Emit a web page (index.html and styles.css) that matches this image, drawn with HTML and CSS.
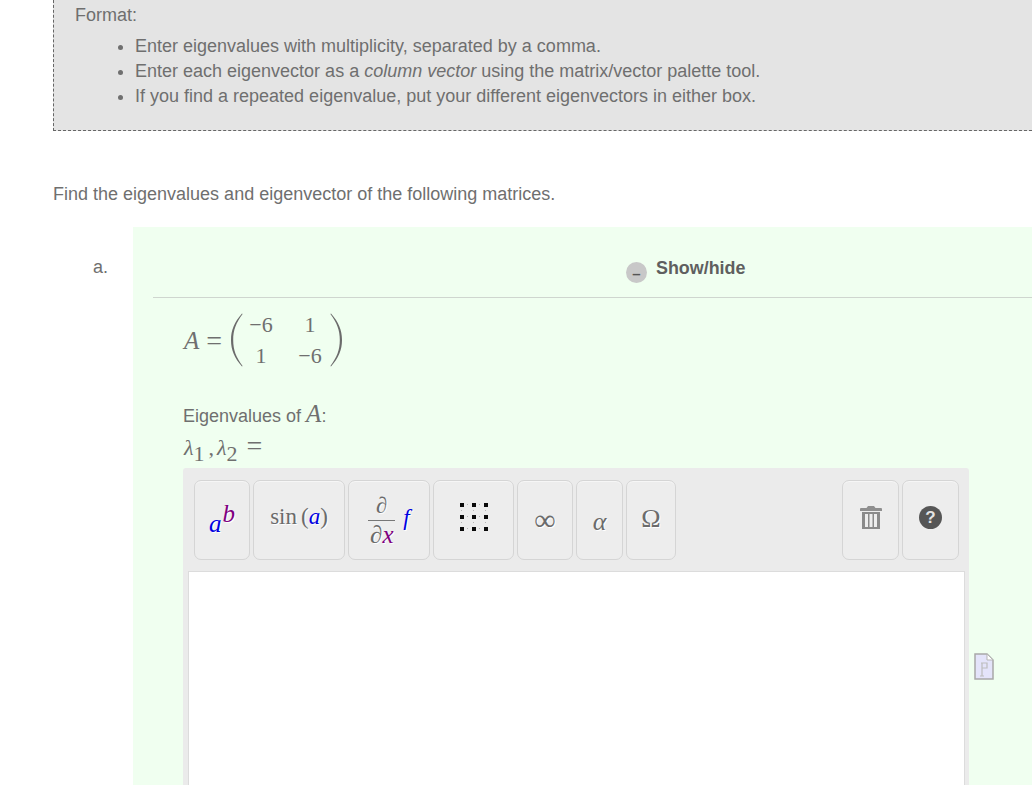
FILE: index.html
```html
<!DOCTYPE html>
<html lang="en">
<head>
<meta charset="utf-8">
<title>Eigenvalues</title>
<link rel="stylesheet" href="styles.css">
</head>
<body>
<section class="notice">
  <p class="notice-title">Format:</p>
  <ul class="notice-list">
    <li>Enter eigenvalues with multiplicity, separated by a comma.</li>
    <li>Enter each eigenvector as a <em>column vector</em> using the matrix/vector palette tool.</li>
    <li>If you find a repeated eigenvalue, put your different eigenvectors in either box.</li>
  </ul>
</section>
<p class="intro">Find the eigenvalues and eigenvector of the following matrices.</p>
<section class="part">
  <div class="part-label">a.</div>
  <div class="panel">
    <header class="panel-head">
      <span class="toggle">–</span>
      <span class="toggle-text">Show/hide</span>
    </header>
    <div class="matrix-line math">
      <span class="mvar">A</span><span class="meq">=</span>
      <svg class="paren" width="13" height="54" viewBox="0 0 13 54"><path d="M12 .5C4.500 9 1 17 1 27s3.500 18 11 26.500l.6-.5C6 44 3.200 37 3.200 27S6 10 12.600 1z" fill="#6b6b6b"/></svg>
      <div class="matrix">
        <span>−6</span><span>1</span>
        <span>1</span><span>−6</span>
      </div>
      <svg class="paren" width="13" height="54" viewBox="0 0 13 54"><path d="M1 .5C8.500 9 12 17 12 27s-3.500 18-11 26.500L.4 53C7 44 9.800 37 9.800 27S7 10 .4 1z" fill="#6b6b6b"/></svg>
    </div>
    <p class="label">Eigenvalues of <span class="mvar-inline">A</span>:</p>
    <div class="lambda-line math"><i>λ</i><sub>1</sub><span class="comma">,</span><i>λ</i><sub>2</sub><span class="lambda-eq">=</span></div>
    <div class="editor-wrap">
      <div class="toolbar">
        <button class="tb w56 math"><i class="blue big base">a</i><i class="purple big power">b</i></button>
        <button class="tb w92 math raised">sin<span class="thin"> (</span><i class="blue">a</i>)</button>
        <button class="tb w82 math">
          <span class="frac"><span class="frac-top">∂</span><span class="frac-bot">∂<i class="purple">x</i></span></span><i class="blue fn">f</i>
        </button>
        <button class="tb w81">
          <svg class="icon-up" width="30" height="30" viewBox="0 0 30 30">
            <g fill="#b5b5b5"><rect x="8" y="2" width="1" height="1"/><rect x="20" y="2" width="1" height="1"/><rect x="8" y="14" width="1" height="1"/><rect x="20" y="14" width="1" height="1"/><rect x="8" y="26" width="1" height="1"/><rect x="20" y="26" width="1" height="1"/><rect x="2" y="8" width="1" height="1"/><rect x="14" y="8" width="1" height="1"/><rect x="26" y="8" width="1" height="1"/><rect x="2" y="20" width="1" height="1"/><rect x="14" y="20" width="1" height="1"/><rect x="26" y="20" width="1" height="1"/></g>
            <g fill="#0a0a0a"><rect x="1" y="1" width="4" height="4"/><rect x="13" y="1" width="4" height="4"/><rect x="25" y="1" width="4" height="4"/><rect x="1" y="13" width="4" height="4"/><rect x="13" y="13" width="4" height="4"/><rect x="25" y="13" width="4" height="4"/><rect x="1" y="25" width="4" height="4"/><rect x="13" y="25" width="4" height="4"/><rect x="25" y="25" width="4" height="4"/></g>
          </svg>
        </button>
        <button class="tb w56 math sym-inf">∞</button>
        <button class="tb w47 math sym-alpha"><i>α</i></button>
        <button class="tb w50 math sym-omega">Ω</button>
        <button class="tb w57 push">
          <svg class="icon-up" width="24" height="25" viewBox="0 0 24 25"><path d="M9 1h6l1.500 2H22a1 1 0 0 1 1 1v2H1V4a1 1 0 0 1 1-1h5.500z" fill="#8f8f8f"/><path d="M3 7h18v17H3zM6 9v13h3V9zM10.500 9v13h3V9zM15 9v13h3V9z" fill="#8a8a8a" fill-rule="evenodd"/></svg>
        </button>
        <button class="tb w57">
          <span class="help">?</span>
        </button>
      </div>
      <div class="editor"></div>
      <svg class="file-icon" width="20" height="27" viewBox="0 0 20 27"><path d="M1 1h12l6 6v19H1z" fill="#e4e4fa" stroke="#a8a8a8" stroke-width="1.500"/><path d="M13 1l6 6h-6z" fill="#fff" stroke="#b5b5b5"/><path d="M7 10h6v5H8M8 10v13M6 23h4" fill="none" stroke="#bdbdbd" stroke-width="1.200"/></svg>
    </div>
  </div>
</section>
</body>
</html>
```
FILE: styles.css
```css
html, body {
  margin: 0;
  padding: 0;
  height: 785px;
  overflow: hidden;
  background: #fff;
}
body {
  font-family: "Liberation Sans", Arial, sans-serif;
  font-size: 18px;
  line-height: 25px;
  color: #6f6f6f;
}
p { margin: 0; }

.notice {
  margin-left: 53px;
  height: 130px;
  background: #e4e4e4;
  border-left: 1px dashed #666;
  border-bottom: 1px dashed #666;
  padding-left: 21px;
}
.notice-title { padding-top: 3px; }
.notice-list {
  margin: 6px 0 0;
  padding-left: 60px;
}
.intro {
  margin: 51px 0 0 53px;
}

.part {
  display: flex;
  margin-top: 20px;
}
.part-label {
  flex: none;
  width: 40px;
  margin-left: 93px;
  padding-top: 28px;
}
.panel {
  flex: 1;
  background: #f0fff0;
  padding-left: 20px;
  height: 600px;
  min-width: 0;
}
.panel-head {
  display: flex;
  align-items: flex-start;
  height: 70px;
  border-bottom: 1px solid #cfd6cf;
  padding-left: 473px;
}
.toggle {
  margin-top: 35px;
  width: 21px;
  height: 21px;
  border-radius: 50%;
  background: #c8c8c8;
  color: #555;
  font-size: 15px;
  font-weight: bold;
  line-height: 23px;
  text-align: center;
}
.toggle-text {
  margin: 29px 0 0 9px;
  font-weight: bold;
  font-size: 17.900px;
  color: #5f5f5f;
}

.math {
  font-family: "Liberation Serif", "DejaVu Serif", serif;
}
.matrix-line {
  display: flex;
  align-items: center;
  margin: 15px 0 0 31px;
  height: 54px;
  font-size: 25px;
}
.mvar { font-style: italic; }
.meq {
  font-size: 28px;
  margin: 0 8px 0 7px;
}
.matrix {
  display: grid;
  grid-template-columns: 36px 36px;
  column-gap: 13px;
  grid-auto-rows: 31px;
  margin: 0 2px 0 0;
  justify-items: center;
  align-items: center;
  font-size: 22px;
}
.paren { flex: none; }

.label {
  margin: 37px 0 0 30px;
}
.mvar-inline {
  font-family: "Liberation Serif", serif;
  font-style: italic;
  font-size: 25px;
  line-height: 0;
}
.lambda-line {
  margin: 6px 0 0 31px;
  height: 33px;
  font-size: 22px;
  line-height: 26px;
}
.lambda-line sub { font-size: 22px; line-height: 0; vertical-align: -6px; }
.comma { margin: 0 3px 0 4px; }
.lambda-eq {
  font-size: 28px;
  line-height: 0;
  margin-left: 9px;
}

.editor-wrap {
  position: relative;
  margin-left: 30px;
  width: 786px;
  height: 400px;
  box-sizing: border-box;
  background: #ebebeb;
  padding: 12px 4px 0 5px;
  border-radius: 3px 3px 0 0;
}
.toolbar {
  display: flex;
  gap: 3px;
  padding: 0 6px;
}
.tb {
  flex: none;
  height: 80px;
  padding: 0;
  display: flex;
  align-items: center;
  justify-content: center;
  background: #ededed;
  border: 1px solid #d5d5d5;
  border-radius: 7px;
  box-shadow: inset 0 1px 0 #f6f6f6;
  color: #6b6b6b;
  font-size: 23px;
  text-shadow: 1px 1px 0 #fff;
}
.w47 { width: 47px; }
.w50 { width: 50px; }
.w56 { width: 56px; }
.w57 { width: 57px; }
.w81 { width: 81px; }
.w82 { width: 82px; }
.w92 { width: 92px; }
.push { margin-left: auto; }
.blue { color: #0000e0; }
.purple { color: #800080; }
.big { font-size: 25px; line-height: 25px; }
.base { margin-top: 6px; }
.power { align-self: flex-start; margin: 20px 0 0 1px; }
.raised { padding-bottom: 6px; }
.thin { margin-left: 4px; }
.frac {
  display: inline-flex;
  flex-direction: column;
  align-items: center;
  margin-right: 8px;
}
.frac-top {
  width: 27px;
  text-align: center;
  border-bottom: 1px solid #777;
  line-height: 25px;
  padding-bottom: 2px;
}
.frac-bot { font-size: 25px; line-height: 27px; }
.fn { font-size: 23px; margin-top: -4px; }
.sym-inf { font-size: 30px; }
.sym-alpha { font-size: 26px; padding-top: 3px; }
.sym-omega { font-size: 26px; padding-bottom: 3px; }
.help {
  display: block;
  width: 23px;
  height: 23px;
  border-radius: 50%;
  background: #565656;
  color: #e4e4e4;
  font-weight: bold;
  font-size: 17px;
  line-height: 23px;
  text-align: center;
  text-shadow: none;
  font-family: "Liberation Sans", sans-serif;
  margin-top: -6px;
}
.icon-up { margin-top: -6px; }
.editor {
  margin-top: 11px;
  height: 300px;
  background: #fff;
  border: 1px solid #dcdcdc;
}
.file-icon {
  position: absolute;
  left: 791px;
  top: 185px;
}
```
